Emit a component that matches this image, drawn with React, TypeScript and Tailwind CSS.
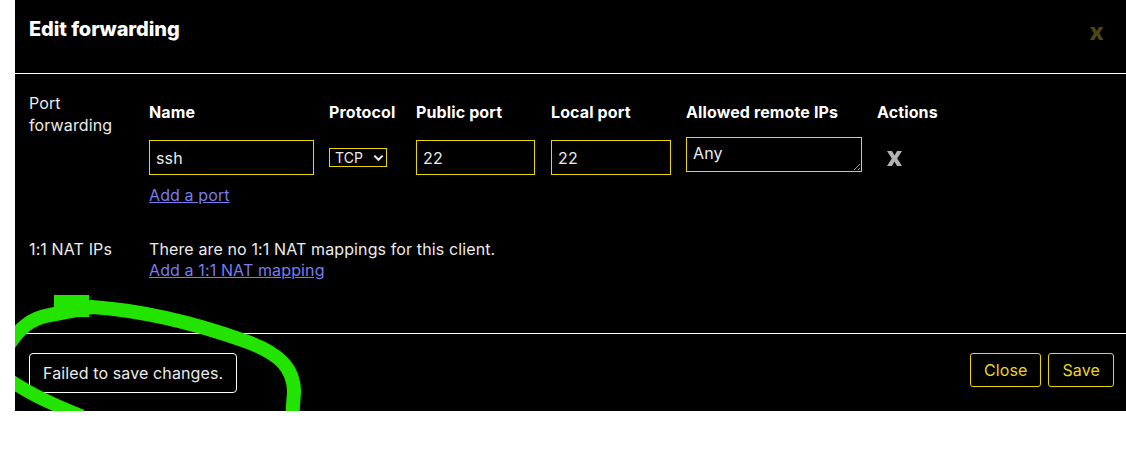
import React from "react";

const cols = "grid grid-cols-[180px_87px_135px_135px_191px_auto]";
const field =
  "h-[35px] border border-[#e8d700] bg-black px-[6px] text-[16px] text-[#ececec] outline-none";

function CloseGlyph() {
  return (
    <svg width="17" height="17" viewBox="0 0 17 17" className="block">
      <path d="M1 1 L6 1 L8.5 5.5 L11 1 L16 1 L11.2 8.5 L16 16 L11 16 L8.5 11.5 L6 16 L1 16 L5.8 8.5 Z" fill="#b3b3b3" />
    </svg>
  );
}

function Scribble() {
  // hand-drawn green circle round the error message
  return (
    <svg
      className="pointer-events-none absolute left-[-15px] top-0"
      width="1126"
      height="411"
      viewBox="0 0 1126 411"
    >
      <g fill="none" stroke="#23e300" strokeWidth="14" strokeLinejoin="round">
        <path d="M8 346 C18 330 30 318 50 315 L92 307 C150 311 200 325 245 341 C279 353 294 368 294 392 L292 420" />
        <path d="M4 376 C24 391 46 402 82 416" strokeWidth="13" />
      </g>
      <rect x="54" y="295" width="35" height="22" fill="#23e300" />
    </svg>
  );
}

export default function App() {
  return (
    <div className="min-h-[458px] w-[1126px] bg-white font-['Inter',sans-serif]">
      <div className="relative ml-[15px] flex h-[411px] w-[1111px] flex-col overflow-hidden bg-black text-[16px] tracking-[0.12px] text-[#ececec]">
        <div className="flex h-[74px] shrink-0 items-start justify-between border-b border-white pl-[14px] pr-[22px] pt-[15px]">
          <h2 className="text-[20px] font-extrabold leading-[28px] tracking-[-0.1px] text-white">Edit forwarding</h2>
          <span className="mt-[5px] text-[24px] font-extrabold leading-[24px] text-[#4b4812]">x</span>
        </div>

        <div className="flex-1 pl-[14px] pt-[18px]">
          <div className="flex">
            <div className="w-[120px] leading-[22px]">
              Port
              <br />
              forwarding
            </div>
            <div className="pt-[9px]">
              <div className={`${cols} gap-y-[17px] font-bold leading-[22px] text-white`}>
                <div>Name</div>
                <div>Protocol</div>
                <div>Public port</div>
                <div>Local port</div>
                <div>Allowed remote IPs</div>
                <div>Actions</div>

                <input readOnly value="ssh" className={`${field} w-[165px] font-normal`} />
                <div className="mt-[8px] flex h-[19px] w-[58px] items-center gap-[10px] border border-[#e8d700] pl-[5px] text-[14px] font-normal leading-none text-[#ececec]">
                  TCP
                  <svg width="11" height="8" viewBox="0 0 11 8">
                    <path d="M1.3 1.6 L5.5 5.8 L9.7 1.6" fill="none" stroke="#ececec" strokeWidth="2" />
                  </svg>
                </div>
                <input readOnly value="22" className={`${field} w-[119px] font-normal`} />
                <input readOnly value="22" className={`${field} w-[120px] font-normal`} />
                <textarea
                  readOnly
                  value="Any"
                  className="-mt-[3px] h-[35px] w-[176px] border border-[#e8d700] bg-black px-[6px] pt-[4px] text-[16px] font-normal leading-[22px] text-[#ececec] outline-none"
                />
                <div className="ml-[9px] mt-[10px]">
                  <CloseGlyph />
                </div>
              </div>
              <a href="#" className="mt-[9px] block leading-[22px] text-[#7b7bef] underline">
                Add a port
              </a>
            </div>
          </div>

          <div className="mt-[33px] flex leading-[21px]">
            <div className="w-[120px]">1:1 NAT IPs</div>
            <div>
              <div>There are no 1:1 NAT mappings for this client.</div>
              <a href="#" className="block text-[#7b7bef] underline">
                Add a 1:1 NAT mapping
              </a>
            </div>
          </div>
        </div>

        <div className="flex h-[78px] shrink-0 items-start justify-between border-t border-white pl-[14px] pr-[12px] pt-[19px]">
          <div className="flex h-[40px] items-center rounded-[4px] border border-white px-[13px]">
            Failed to save changes.
          </div>
          <div className="flex gap-[7px]">
            <button className="h-[34px] rounded-[3px] border border-[#e8d700] px-[13px] text-[#ead81a]">Close</button>
            <button className="h-[34px] rounded-[3px] border border-[#e8d700] px-[13px] text-[#ead81a]">Save</button>
          </div>
        </div>

        <Scribble />
      </div>
    </div>
  );
}
